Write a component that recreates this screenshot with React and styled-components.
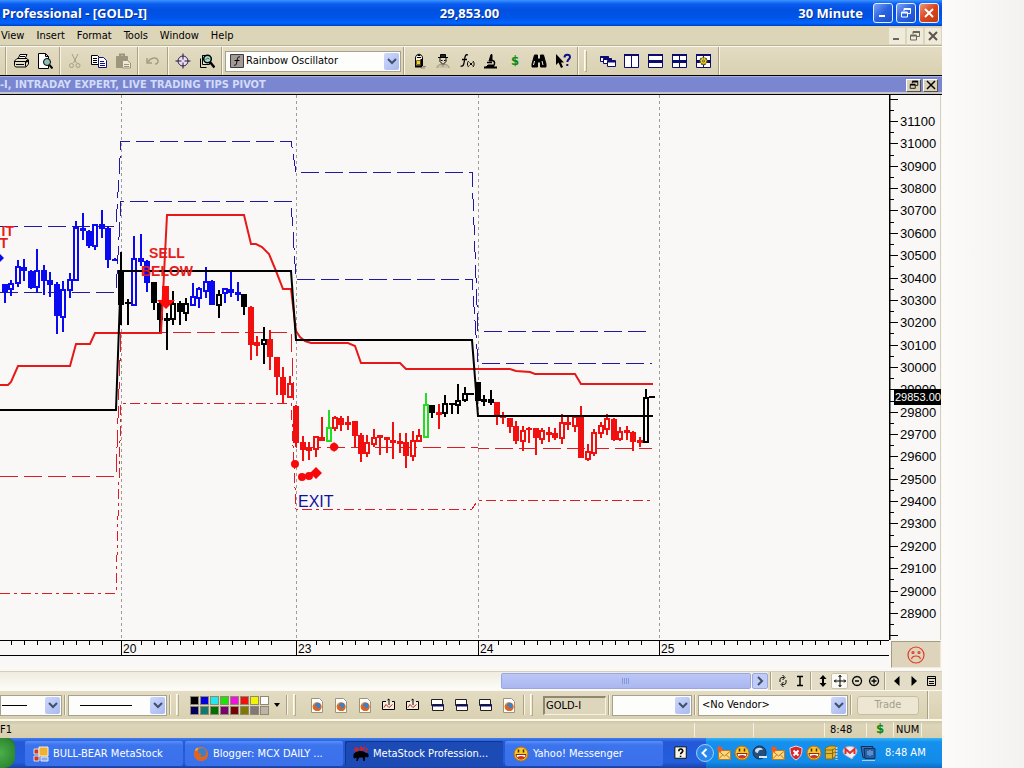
import React from "react";
import styled, { createGlobalStyle, css } from "styled-components";

const GlobalStyle = createGlobalStyle`
	* {
		box-sizing: border-box;
	}

	body {
		margin: 0;
		background-color: #f8f7f5;
		font-family: "DejaVu Sans Condensed", "Noto Sans", sans-serif;
		font-size: 11px;
		line-height: 14px;
		color: #000;
	}

	button,
	input,
	select {
		margin: 0;
		font: inherit;
		color: inherit;
	}
`;

const Page = styled.div`
	display: flex;
	min-height: 100vh;
`;

const Desktop = styled.main`
	flex: 1;
	min-width: 0;
	display: flex;
	flex-direction: column;
	background-color: #ddd5b8;
`;

const Gutter = styled.aside`
	flex: 0 0 82px;
	background: linear-gradient(90deg, #fcfbf9, #f3f2f0);
`;

const TitleBar = styled.header`
	display: grid;
	grid-template-columns: 1fr auto 1fr;
	align-items: center;
	height: 26px;
	padding: 0 3px 0 0;
	background: linear-gradient(#3a93ff 0, #0a5cf0 4px, #0150e0 10px, #0055ea 18px, #0066ff 23px, #0040c0 26px);
	color: #fff;
	font-family: "Noto Sans", sans-serif;
	font-size: 13px;
	font-weight: bold;
	text-shadow: 1px 1px #0a2f8c;
`;

const AppTitle = styled.h1`
	display: flex;
	justify-content: flex-end;
	width: 147px;
	margin: 0;
	overflow: hidden;
	white-space: nowrap;
	font-size: 13px;
`;

const TitleEnd = styled.div`
	display: flex;
	align-items: center;
	justify-content: flex-end;
	gap: 3px;
`;

const Interval = styled.span`
	margin-right: 7px;
`;

const WindowButton = styled.button`
	display: flex;
	align-items: center;
	justify-content: center;
	width: 20px;
	height: 20px;
	padding: 0;
	border: 1px solid #e8eefc;
	border-radius: 3px;
	background: ${(props) => (props.$close ? "linear-gradient(135deg, #f0957c, #d9441c 50%, #c23a14)" : "linear-gradient(135deg, #7ba3f5, #2a62e0 50%, #1c4fc8)")};
`;

const MenuBar = styled.nav`
	display: flex;
	align-items: center;
	justify-content: space-between;
	height: 20px;
	border-bottom: 1px solid #b9b298;
`;

const MenuItems = styled.div`
	display: flex;
	gap: 12px;
	padding-left: 1px;
`;

const MenuItem = styled.button`
	padding: 0;
	border: 0;
	background: none;
`;

const ChildButtons = styled.div`
	display: flex;
	gap: 2px;
	padding-right: 1px;
`;

const ChildButton = styled.button`
	display: flex;
	align-items: center;
	justify-content: center;
	width: 16px;
	height: 16px;
	padding: 0;
	border: 0;
	background-color: #efebdc;
`;

const Toolbar = styled.div`
	display: flex;
	align-items: center;
	height: 29px;
	padding-left: ${(props) => props.$inset || 0}px;
	border-top: 1px solid #fbf9f0;
	background: linear-gradient(#e3dcc3, #dad1b2);
`;

const Separator = styled.span`
	flex: 0 0 auto;
	align-self: stretch;
	width: 2px;
	margin: ${(props) => (props.$tall ? "0 2px" : "4px 2px")};
	border-left: 1px solid #a9a184;
	border-right: 1px solid #f8f5e8;
`;

const Grip = styled.span`
	flex: 0 0 auto;
	align-self: stretch;
	width: 3px;
	margin: 3px 9px 3px 3px;
	border: 1px solid #b5ac8e;
	border-left-color: #fffdf2;
	border-top-color: #fffdf2;
	background-color: #efe9d5;
`;

const IconButton = styled.button`
	flex: 0 0 auto;
	display: flex;
	align-items: center;
	justify-content: center;
	width: ${(props) => props.$width || 24}px;
	height: ${(props) => (props.$width ? 16 : 24)}px;
	padding: 0;
	border: 0;
	border-radius: 2px;
	background-color: ${(props) => (props.$pressed ? "#fbfaf5" : "transparent")};
	box-shadow: ${(props) => (props.$pressed ? "inset 0 0 0 1px #c9c2a8" : "none")};
`;

const Combo = styled.label`
	flex: 0 0 auto;
	display: flex;
	align-items: center;
	width: ${(props) => props.$width}px;
	height: 21px;
	padding: 1px ${(props) => (props.$icon ? "1px 1px 4px" : "1px")};
	border: 1px solid #a5a28f;
	background-color: #fdfdfb;
`;

const ComboValue = styled.span`
	flex: 1;
	min-width: 0;
	display: grid;
	align-items: center;
	height: 100%;

	> * {
		grid-area: 1 / 1;
	}
`;

const ComboSelect = styled.select`
	width: 100%;
	height: 17px;
	padding: 0 2px;
	border: 0;
	appearance: none;
	background: transparent;
	outline: none;
`;

const LineSample = styled.span`
	height: 1px;
	margin: 0 18px 0 ${(props) => props.$start}px;
	background-color: #000;
`;

const ComboArrow = styled.span`
	display: flex;
	align-items: center;
	justify-content: center;
	width: 15px;
	height: 17px;
	border-radius: 2px;
	background: linear-gradient(135deg, #cdd8fb, #a9b9f0);
`;

const ChildTitle = styled.div`
	display: flex;
	align-items: center;
	justify-content: space-between;
	height: 20px;
	padding-right: 4px;
	border-top: 1px solid #000;
	border-bottom: 1px solid #000;
	background-color: #7a86d0;
	box-shadow: inset 0 -2px #c9c6cc, inset 0 1px #aab0dc;
	color: #d2dcfa;
`;

const ChildName = styled.h2`
	margin: 0;
	font-size: 11px;
	font-weight: bold;
	white-space: nowrap;
`;

const ChildTools = styled.div`
	display: flex;
	gap: 2px;
`;

const RaisedButton = styled.button`
	display: flex;
	align-items: center;
	justify-content: center;
	width: 15px;
	height: 13px;
	padding: 0;
	border: 1px solid #55513f;
	border-top-color: #fff;
	border-left-color: #fff;
	background-color: #d8d0b8;
`;

const ChartGrid = styled.section`
	display: grid;
	grid-template-columns: minmax(0, 1fr) 53px;
	background-color: #f9f8f7;
`;

const Drawing = styled.svg`
	display: block;
	width: 100%;
	height: ${(props) => props.$height}px;
	font-family: "Liberation Sans", sans-serif;
`;

const MoodCell = styled.div`
	padding: 1px 1px 3px 2px;
`;

const MoodButton = styled.button`
	display: flex;
	align-items: center;
	justify-content: center;
	width: 100%;
	height: 27px;
	padding: 0;
	border: 1px solid #a39c83;
	border-right-color: #efe9d6;
	border-bottom-color: #efe9d6;
	background-color: #ddd4bb;
`;

const ScrollRow = styled.div`
	display: flex;
	align-items: center;
	height: 19px;
	padding-right: 3px;
	border-top: 1px solid #d5cfba;
	background-color: #e3dcc6;
`;

const Track = styled.div`
	flex: 1;
	display: flex;
	justify-content: flex-end;
	gap: 1px;
	height: 18px;
	padding: 1px 0;
	background: linear-gradient(#efede0, #fdfcf8);
`;

const Thumb = styled.div`
	display: flex;
	align-items: center;
	justify-content: center;
	width: 250px;
	border: 1px solid #98a6e2;
	border-radius: 2px;
	background: linear-gradient(#bcc7f7, #aab7f0);
`;

const ScrollButton = styled.button`
	display: flex;
	align-items: center;
	justify-content: center;
	width: 16px;
	padding: 0;
	border: 1px solid #9aa8dd;
	border-radius: 2px;
	background-color: #c0cbf7;
`;

const Palette = styled.div`
	display: grid;
	grid-template-columns: repeat(8, 9px);
	gap: 1px;
	margin-left: 2px;
`;

const Swatch = styled.button`
	width: 9px;
	height: 9px;
	padding: 0;
	border: 1px solid #8f8971;
	background-color: ${(props) => props.$color};
`;

const SymbolInput = styled.input`
	flex: 0 0 auto;
	width: 63px;
	height: 19px;
	margin-left: 1px;
	padding: 0 1px;
	border: 2px solid #8f8870;
	border-right: 1px solid #f5f1e2;
	border-bottom: 1px solid #f5f1e2;
	border-radius: 0;
	background-color: #ddd5bc;
`;

const TradeButton = styled.button`
	width: 62px;
	height: 19px;
	margin: 0 6px 0 3px;
	padding: 0;
	border: 1px solid #c5bea6;
	border-radius: 3px;
	background-color: #ece6d3;
	color: #a49e88;
`;

const StatusBar = styled.footer`
	display: flex;
	align-items: center;
	height: 19px;
	padding-right: 20px;
	border-top: 2px solid #fbf8ec;
	background: linear-gradient(#cfc6a8, #ddd5b9 4px, #d8cfb0);
`;

const StatusCell = styled.span`
	flex: ${(props) => (props.$width ? `0 0 ${props.$width}px` : 1)};
	padding-left: ${(props) => props.$pad || 0}px;
	border-right: 1px solid #f5f1e2;
	white-space: nowrap;
`;

const TaskBar = styled.div`
	flex: 1 0 30px;
	display: flex;
	background: linear-gradient(#3f7ef0, #2458d8 4px, #245edb 24px, #1941a5);
	color: #fff;
`;

const StartButton = styled.button`
	width: 15px;
	margin-right: 10px;
	padding: 0;
	border: 0;
	border-radius: 0 8px 10px 0;
	background: radial-gradient(circle at 0 50%, #4cb04a, #2f8a33 70%, #20601f);
`;

const TaskButton = styled.button`
	flex: 0 0 auto;
	display: flex;
	align-items: center;
	gap: 4px;
	width: 158px;
	margin: 3px 2px 2px 0;
	padding: 0 8px;
	border: 0;
	border-radius: 2px;
	color: #fff;
	white-space: nowrap;
	${(props) =>
		props.$active
			? css`
					background-color: #1c4bb5;
					box-shadow: inset 1px 1px #12358c;
				`
			: css`
					background: linear-gradient(#5a90fa, #3c74ee 4px, #3a70ea);
				`}
`;

const TaskSpacer = styled.div`
	flex: 1;
	display: flex;
	align-items: center;
	justify-content: center;
	padding-right: 10px;
`;

const Tray = styled.div`
	display: flex;
	align-items: center;
	width: 236px;
	background: linear-gradient(#35b5f5, #1690ee 4px, #128ce8 24px, #0f6cc4);
`;

const TrayToggle = styled.button`
	display: flex;
	width: 18px;
	margin: 0 2px 0 -10px;
	padding: 0;
	border: 0;
	background: none;
`;

const TrayIcons = styled.div`
	display: flex;
	gap: 2px;
	margin-right: 9px;
`;

// ---- chart data ----

const BLUE = "#0a0af0";
const NAVY = "#2018a0";
const RED = "#f01010";
const GREEN = "#22dd22";
const BLACK = "#000";

// x, high, low, body top, body bottom, colour, hollow
const candles = [
	[5, 284, 303, 284, 292, BLUE],
	[11, 280, 296, 284, 289, BLUE, 1],
	[18, 260, 287, 267, 283, BLUE, 1],
	[24, 259, 281, 267, 271, BLUE],
	[31, 270, 289, 271, 288, BLUE],
	[37, 249, 293, 271, 287, BLUE, 1],
	[44, 265, 295, 270, 281, BLUE],
	[50, 272, 297, 280, 285, BLUE],
	[57, 282, 334, 284, 316, BLUE],
	[63, 281, 332, 290, 317, BLUE, 1],
	[70, 273, 298, 280, 290, BLUE, 1],
	[76, 221, 281, 228, 280, BLUE, 1],
	[83, 213, 240, 228, 231, BLUE],
	[89, 230, 248, 231, 246, BLUE],
	[95, 225, 250, 225, 246, BLUE, 1],
	[102, 210, 238, 224, 229, BLUE],
	[108, 226, 268, 228, 260, BLUE],
	[115, 258, 261, 259, 261, BLUE],
	[121, 252, 325, 270, 305, BLACK],
	[128, 299, 325, 302, 304, BLACK],
	[134, 236, 305, 259, 305, BLUE, 1],
	[141, 234, 266, 258, 262, BLUE],
	[147, 260, 292, 261, 283, BLUE],
	[154, 282, 310, 282, 303, BLACK],
	[160, 302, 332, 303, 320, BLACK],
	[167, 313, 350, 318, 321, BLACK],
	[173, 291, 325, 304, 319, BLACK, 1],
	[180, 301, 325, 303, 312, BLACK],
	[186, 298, 321, 304, 313, BLACK, 1],
	[193, 283, 305, 297, 305, BLUE, 1],
	[199, 287, 308, 289, 298, BLUE, 1],
	[206, 267, 298, 282, 291, BLUE, 1],
	[212, 280, 305, 281, 305, BLUE],
	[219, 290, 318, 295, 305, BLACK, 1],
	[225, 288, 303, 289, 293, BLUE, 1],
	[231, 272, 297, 289, 293, BLUE],
	[238, 282, 301, 292, 295, BLUE],
	[244, 294, 315, 294, 307, BLACK],
	[251, 306, 360, 307, 345, RED],
	[257, 336, 356, 342, 346, RED],
	[264, 327, 364, 340, 344, BLACK, 1],
	[270, 330, 370, 339, 357, RED],
	[277, 357, 395, 357, 377, RED],
	[283, 367, 403, 377, 395, RED],
	[290, 376, 397, 384, 397, RED, 1],
	[296, 405, 447, 406, 443, RED],
	[303, 436, 461, 442, 450, RED],
	[309, 442, 460, 448, 451, RED],
	[316, 436, 457, 437, 449, RED, 1],
	[322, 417, 441, 437, 441, RED],
	[329, 410, 441, 428, 441, GREEN, 1],
	[335, 416, 431, 418, 428, RED, 1],
	[341, 416, 431, 418, 425, RED],
	[348, 416, 430, 422, 425, RED],
	[355, 421, 447, 421, 436, RED],
	[361, 433, 462, 435, 454, RED],
	[367, 435, 457, 443, 453, RED, 1],
	[374, 429, 447, 438, 444, RED, 1],
	[380, 435, 455, 435, 438, RED],
	[387, 437, 453, 437, 440, RED],
	[393, 422, 459, 440, 443, RED],
	[400, 433, 453, 441, 444, RED],
	[406, 433, 468, 442, 456, RED],
	[413, 431, 461, 441, 456, RED, 1],
	[419, 429, 442, 436, 441, RED, 1],
	[426, 393, 438, 405, 437, GREEN, 1],
	[432, 405, 418, 405, 413, BLACK],
	[439, 404, 429, 412, 415, RED],
	[445, 395, 417, 404, 413, BLACK, 1],
	[452, 403, 414, 403, 405, BLACK],
	[458, 384, 414, 401, 405, BLACK, 1],
	[465, 387, 402, 394, 400, BLACK, 1],
	[471, 393, 395, 393, 395, BLACK],
	[478, 382, 401, 382, 401, BLACK],
	[484, 395, 406, 399, 402, BLACK],
	[491, 390, 405, 399, 403, BLACK],
	[497, 402, 425, 402, 415, RED],
	[503, 412, 424, 415, 418, RED],
	[510, 418, 433, 418, 427, RED],
	[516, 421, 444, 426, 441, RED],
	[523, 426, 451, 431, 441, RED, 1],
	[529, 427, 443, 428, 430, RED],
	[536, 428, 455, 428, 438, RED],
	[542, 428, 444, 431, 439, RED, 1],
	[549, 427, 442, 432, 435, RED],
	[555, 428, 440, 433, 438, RED],
	[562, 414, 444, 423, 438, RED, 1],
	[568, 415, 430, 422, 425, RED],
	[575, 416, 432, 417, 426, RED, 1],
	[581, 406, 458, 416, 458, RED],
	[588, 444, 461, 452, 459, RED, 1],
	[594, 429, 456, 433, 453, RED, 1],
	[601, 422, 438, 426, 433, RED, 1],
	[607, 414, 435, 419, 429, RED, 1],
	[614, 418, 441, 419, 440, RED],
	[620, 427, 441, 432, 439, RED, 1],
	[627, 426, 440, 430, 433, RED],
	[633, 431, 451, 432, 442, RED],
	[640, 437, 447, 440, 443, RED],
	[646, 389, 443, 398, 442, BLACK, 1],
	[652, 396, 398, 396, 398, BLACK],
];

const pivots = [
	{ color: NAVY, dash: "18 6", points: "0,226 116,226 121,141 291,141 296,172 472,172 478,331 652,331" },
	{ color: NAVY, dash: "18 6", points: "0,292 116,292 121,201 291,201 296,279 472,279 478,363 652,363" },
	{ color: "#dc1c24", dash: "18 6", points: "0,476 116,476 121,332 291,332 296,447 472,447 478,448 652,448" },
	{ color: "#dc1c24", dash: "10 4 3 4", points: "0,593 116,593 121,403 291,403 296,509 472,509 478,500 652,500" },
];

const pivotLine = "0,410 116,410 121,271 291,271 296,340 472,340 478,416 653,416";

const trailingStop =
	"0,385 8,385 11,382 18,366 70,366 76,344 90,344 95,333 161,333 167,215 244,215 251,244 256,244 262,247 269,254 276,271 283,289 291,289 296,331 300,337 305,341 311,343 348,343 355,346 361,363 400,363 406,369 510,369 516,371 530,372 535,374 575,374 581,384 653,384";

const days = [
	{ x: 121, label: "20", ticks: [141, 283] },
	{ x: 296, label: "23", ticks: [316, 466] },
	{ x: 478, label: "24", ticks: [498, 648] },
	{ x: 659, label: "25", ticks: [685, 884] },
];

const priceY = (price) => Math.round(121 + ((31100 - price) / 100) * 22.36);

const range = (from, to, step) => {
	const values = [];
	for (let v = from; v <= to; v += step) values.push(v);
	return values;
};

const Candle = ({ data }) => {
	const [x, high, low, top, bottom, color, hollow] = data;
	return (
		<g>
			<path d={`M${x} ${high}V${low}`} stroke={color} strokeWidth="2" />
			{hollow ? (
				<rect x={x - 2} y={top} width="4" height={bottom - top} fill="#faf9f8" stroke={color} strokeWidth="2" />
			) : (
				<rect x={x - 3} y={top} width="6" height={bottom - top} fill={color} />
			)}
		</g>
	);
};

const Plot = () => (
	<Drawing $height={545} role="img" aria-label="GOLD-I 30 minute candles">
		<g transform="translate(0 -95)">
			{days.map((day) => (
				<path key={day.x} d={`M${day.x}.5 95V640`} stroke="#a09a9a" strokeDasharray="3 3" />
			))}
			<g fill="none" shapeRendering="crispEdges">
				{pivots.map((line) => (
					<polyline key={line.points} points={line.points} stroke={line.color} strokeDasharray={line.dash} />
				))}
			</g>
			{candles.map((c) => (
				<Candle key={c[0]} data={c} />
			))}
			<polyline points={trailingStop} fill="none" stroke="#e81818" strokeWidth="2" />
			<polyline points={pivotLine} fill="none" stroke="#000" strokeWidth="2" />
			<path d="M162 286h7v14h6l-9 9-9-9h5z" fill="#ff0a0a" />
			<g fill="#f80808">
				<circle cx="295" cy="464" r="4" />
				<circle cx="302" cy="477" r="4" />
				<circle cx="309" cy="476" r="4" />
				<path d="M316 467l6 6-6 6-6-6z" />
				<circle cx="334" cy="447" r="4" />
				<path d="M330 447l4-5 5 5-5 5z" />
			</g>
			<path d="M-4 258l4-4 4 4-4 4z" fill={BLUE} />
			<g fill="#e81c1c" fontSize="14" fontWeight="bold" textAnchor="middle">
				<text x="167" y="258">SELL</text>
				<text x="167" y="276">BELOW</text>
			</g>
			<g fill="#e81c1c" fontSize="14" fontWeight="bold" textAnchor="end">
				<text x="14" y="236">IT</text>
				<text x="8" y="248">T</text>
			</g>
			<text x="298" y="507" fill="#1010a0" fontSize="16">EXIT</text>
		</g>
	</Drawing>
);

const PriceAxis = () => (
	<Drawing $height={545} aria-label="Price scale">
		<g transform="translate(-889 -95)">
			<path d="M889.5 95V640" stroke="#000" strokeWidth="2" />
			{range(28800, 31200, 100).map((price) => (
				<path key={price} d={`M890 ${priceY(price)}.5h8`} stroke="#000" />
			))}
			{range(28850, 31150, 100).map((price) => (
				<path key={price} d={`M890 ${priceY(price)}.5h4`} stroke="#000" />
			))}
			{range(28900, 31100, 100).map((price) => (
				<text key={price} x="900" y={priceY(price) + 5} fontSize="13">
					{price}
				</text>
			))}
			<path d="M940.5 95V640" stroke="#d5cfb8" />
			<rect x="894" y="389" width="47" height="16" fill="#000" />
			<text x="895" y="401" fontSize="11" fill="#fff">
				29853.00
			</text>
		</g>
	</Drawing>
);

const TimeAxis = () => (
	<Drawing $height={31} aria-label="Time scale">
		<path d="M0 0.5H889M0 15.5H889" stroke="#000" />
		{range(11, 110, 13).map((x) => (
			<path key={x} d={`M${x}.5 0v5`} stroke="#000" />
		))}
		{days.map((day) => (
			<g key={day.x}>
				<path d={`M${day.x}.5 0v16`} stroke="#000" />
				{range(day.ticks[0], day.ticks[1], 13).map((x) => (
					<path key={x} d={`M${x}.5 0v5`} stroke="#000" />
				))}
				<text x={day.x + 2} y="13" fontSize="12">
					{day.label}
				</text>
			</g>
		))}
	</Drawing>
);

// ---- icons ----

const Icon = ({ size = 16, children }) => (
	<svg width={size} height={size} viewBox="0 0 16 16" fill="none" stroke="#000" aria-hidden="true">
		{children}
	</svg>
);

const PrinterIcon = () => (
	<Icon>
		<path d="M5 6l2-4.500h7l-2 4.500" fill="#fff" />
		<path d="M1.500 8l2.500-2.500h10l1.500 1.500v4l-2.500 3H2.500l-1-1.500z" fill="#e6dfc8" />
		<path d="M1.500 8.500h11l2.500-2M12.500 8.500v5M3 11.500h8M7 3.500h5" />
		<path d="M13 9l2-1.500" strokeWidth="2" />
	</Icon>
);

const PreviewIcon = () => (
	<Icon>
		<path d="M1.500.5h7l3 3v12h-10zM8.500.5v3h3" fill="#fff" />
		<circle cx="10" cy="9" r="3.500" fill="#8fc0b8" />
		<path d="M12.500 12l3 3.500" strokeWidth="2" />
	</Icon>
);

const CutIcon = () => (
	<Icon>
		<g stroke="#a59d83">
			<path d="M5 1l4.500 9M11 1L6.500 10" />
			<circle cx="4.500" cy="12.500" r="2" />
			<circle cx="11" cy="12.500" r="2" />
		</g>
	</Icon>
);

const CopyIcon = () => (
	<Icon>
		<path d="M.5 2.500h6l2 2v7h-8z" fill="#fff" />
		<path d="M2 5.500h4M2 7.500h4M2 9.500h4" />
		<path d="M7.500 4.500h5l3 3v7h-8z" fill="#fff" stroke="#101080" />
		<path d="M9 8.500h4M9 10.500h5M9 12.500h5" stroke="#101080" />
	</Icon>
);

const PasteIcon = () => (
	<Icon>
		<path d="M1.500 3.500h11v11h-11z" fill="#9d957c" stroke="#9d957c" />
		<path d="M5 3.500V1.500h4v2" stroke="#9d957c" strokeWidth="2" />
		<path d="M7.500 7.500h5l3 2.500v5h-8zM9 11.500h5M9 13.500h5" fill="#eee8d6" stroke="#9d957c" />
	</Icon>
);

const UndoIcon = () => (
	<Icon>
		<path d="M3 9c3-5 9-5 10-1.500.5 2-1 3.500-3 3.500" stroke="#a59d83" strokeWidth="1.500" />
		<path d="M2 5v5h5" stroke="#a59d83" strokeWidth="1.500" />
	</Icon>
);

const CrosshairIcon = () => (
	<Icon>
		<circle cx="8" cy="8" r="5" fill="#eadff0" stroke="#302050" />
		<path d="M8 .5v6M8 9.500v6M.5 8h6M9.500 8h6" stroke="#201040" />
	</Icon>
);

const ExploreIcon = () => (
	<Icon>
		<path d="M1.500 5.500v9h6M3.500 2.500h6" />
		<path d="M3.500 2.500v9h7v-9z" fill="#dff2dc" />
		<circle cx="8.500" cy="6" r="3.800" fill="#a9d5cc" strokeWidth="1.500" />
		<path d="M11 9l4.500 5.500" strokeWidth="2.500" />
		<path d="M6.500 7l2-2 2 1" stroke="#287848" />
	</Icon>
);

const FunctionIcon = () => (
	<svg width="14" height="14" viewBox="0 0 14 14" aria-hidden="true">
		<path d="M.5.5h13v13H.5z" fill="#a39a96" stroke="#403c3c" />
		<path d="M10 3c-2-.8-2.500 1-3 4s-1 5-3 4M4.500 6.500h5" fill="none" stroke="#000" />
	</svg>
);

const ExpertIcon = () => (
	<Icon>
		<path d="M4.500 13V5c0-5 7-5 7 0v8z" fill="#f5f3e8" />
		<path d="M6 4.500h4M6.500 2.500h3" />
		<path d="M5.500 7.500h4v4h-4z" fill="#e8d230" stroke="#806a10" />
		<path d="M4 13.500h7M10.500 6v7" strokeWidth="2" />
		<path d="M12 13.500h3M10 15h4" stroke="#8a836b" />
	</Icon>
);

const AdvisorIcon = () => (
	<Icon>
		<path d="M3 4.500h10M5.500 4V1.500h5V4" fill="#222" />
		<path d="M5 5v3.500l3 3 3-3V5M6 7.500h1.500M9 7.500h1.500" />
		<path d="M2 15c0-3 2-3 4-4l2 2.500 2-2.500c2 1 4 1 4 4" stroke="#9a937c" fill="#c9c2aa" />
	</Icon>
);

const IndicatorIcon = () => (
	<Icon>
		<path d="M9 2c-2.500-1-3 1-3.500 5s-1 7-4 6M3 6.500h5" strokeWidth="1.300" />
		<path d="M9.500 8c-1.500 2-1.500 4 0 6M14 8c1.500 2 1.500 4 0 6M10.500 9.500l3 3M13.500 9.500l-3 3" />
	</Icon>
);

const TesterIcon = () => (
	<Icon>
		<path d="M8 1.500L6 8h3L9 1.500z" fill="#000" />
		<path d="M9 7.500c3 0 3.500 4 1 5.500M4 9.500h5" strokeWidth="1.500" />
		<path d="M5 12h5l1 2H3z" fill="#000" />
		<path d="M1 14.500h13" strokeWidth="2" />
	</Icon>
);

const Dollar = styled.span`
	color: #0a8a12;
	font-size: 13px;
	font-weight: bold;
`;

const BinocularsIcon = () => (
	<Icon>
		<path d="M3.500 2h3v4h3V2h3l2.500 9v3H9.500V9h-3v5H1v-3z" fill="#000" />
		<path d="M3.500 8l-1 4M11 8l1 4" stroke="#eee" />
	</Icon>
);

const HelpIcon = () => (
	<Icon>
		<path d="M1 1v11l2.500-2.500L6 15l2-1-2-4.500h3z" fill="#000" stroke="none" />
		<path d="M9.500 4.500c0-4 5.500-3.500 5.500-.5 0 2.200-2.700 2.300-2.700 5M12.300 11v2" stroke="#101080" strokeWidth="2" />
	</Icon>
);

const CascadeIcon = () => (
	<Icon>
		<g fill="#fff" stroke="#0c0c70">
			<path d="M.5 3.500h8v5h-8z" />
			<path d="M3.500 5.500h8v5h-8z" />
			<path d="M7.500 7.500h8v6h-8z" />
			<path d="M.5 4h8M3.500 6h8M7.500 8.500h8" strokeWidth="2" />
		</g>
	</Icon>
);

const TileIcon = ({ rows, columns, gear }) => (
	<Icon>
		<path d="M.5 1.500h14v13H.5z" fill="#fff" stroke="#0c0c70" />
		<path d="M0 2h15" stroke="#0c0c70" strokeWidth="2" />
		{rows && <path d="M0 8.500h15" stroke="#0c0c70" strokeWidth="3" />}
		{columns && <path d="M7.500 2v12" stroke="#0c0c70" />}
		{gear && <circle cx="7.500" cy="8" r="3.500" fill="#e5cf28" stroke="#5c500c" strokeDasharray="2 1" strokeWidth="1.500" />}
		{gear && <circle cx="7.500" cy="8" r="1" fill="#fff" stroke="#5c500c" />}
	</Icon>
);

const RestoreGlyph = ({ color, size = 12 }) => (
	<svg width={size} height={size} viewBox="0 0 12 12" fill="none" stroke={color} aria-hidden="true">
		<path d="M4 4V1.500h6.500v5H8" />
		<path d="M4 2h6.500M1.500 5.500h6" strokeWidth="2" />
		<path d="M1.500 5.500h6v4.500h-6z" />
	</svg>
);

const CloseGlyph = ({ color, width = 2 }) => (
	<svg width="12" height="12" viewBox="0 0 12 12" fill="none" stroke={color} strokeWidth={width} aria-hidden="true">
		<path d="M2 2l8 8M10 2l-8 8" />
	</svg>
);

const MinimizeGlyph = ({ color }) => (
	<svg width="12" height="12" viewBox="0 0 12 12" stroke={color} strokeWidth="2" aria-hidden="true">
		<path d="M2 9h6" />
	</svg>
);

const Chevron = ({ right }) => (
	<svg width="10" height="10" viewBox="0 0 10 10" fill="none" stroke="#40506c" strokeWidth="2" aria-hidden="true">
		<path d={right ? "M3 1l4 4-4 4" : "M1 3l4 4 4-4"} />
	</svg>
);

const FirefoxBall = () => (
	<>
		<circle cx="8" cy="8" r="7" fill="#e8701c" stroke="none" />
		<circle cx="9" cy="6.500" r="4.500" fill="#3f7fc4" stroke="none" />
		<path d="M1.500 5c1 0 3 0 4 2 1 0 3 .5 3 2-1 1.500-3 1-4 0 1 3 5 4 8 1 2-2 1-5 0-7 3 3 3 8 0 10.500-4 3-10 1-11-4z" fill="#e2641a" stroke="none" />
		<path d="M2 5c0-2 2-3.500 3-3.500L4.500 4z" fill="#f5b030" stroke="none" />
	</>
);

const DocumentIcon = () => (
	<Icon>
		<path d="M2.500 1.500h8l3 3v11h-11z" fill="#fff" stroke="#9a957f" />
		<g transform="translate(3 4.500) scale(.64)">
			<FirefoxBall />
		</g>
	</Icon>
);

const ChartNoteIcon = () => (
	<Icon>
		<path d="M5 4.500H1.500v8h12v-8H11" fill="#f6efdf" />
		<path d="M8 2v6M6.500 3l1.500-1" />
		<path d="M3 10.500l2-3 3 3 3.500-3" stroke="#b02a20" />
	</Icon>
);

const LayoutIcon = () => (
	<Icon>
		<path d="M2.500 2.500h11v6h-11z" fill="#fff" stroke="#222" />
		<path d="M3.500 7.500h11v6h-11z" fill="#fff" stroke="#222" />
		<path d="M3 8.500h12" strokeWidth="2" stroke="#101060" />
	</Icon>
);

const MoodIcon = () => (
	<svg width="18" height="18" viewBox="0 0 18 18" fill="none" stroke="#e03a28" strokeWidth="1.200" aria-hidden="true">
		<circle cx="9" cy="9" r="8" />
		<circle cx="6" cy="6.500" r="1" />
		<circle cx="12" cy="6.500" r="1" />
		<path d="M4.500 13c1-4 8-4 9 0" />
	</svg>
);

const Smiley = () => (
	<Icon>
		<circle cx="8" cy="8" r="7" fill="#f7c52c" stroke="#b8700c" />
		<path d="M5.500 3.500v3M10.500 3.500v3" stroke="#4a2a06" strokeWidth="1.500" />
		<path d="M3 8.500h10c0 6-10 6-10 0z" fill="#fff" stroke="#8a2a10" />
		<path d="M4.500 11c2-1.500 5-1.500 7 0-1 2.500-6 2.500-7 0z" fill="#d83020" stroke="none" />
	</Icon>
);

const MailIcon = () => (
	<Icon>
		<path d="M2.500 5.500h12v9h-12z" fill="#fbd980" stroke="#c07a1c" />
		<path d="M2.500 6l6 5 6-5M2.500 14l4-4M14.500 14l-4-4" stroke="#c07a1c" />
		<path d="M3.500 0l1 2.500L7 1.500 6 4l2 1.500-2.500.5L4 8 3 5.500 0 5l2-1.500-.5-2.500 2 1z" fill="#f05a20" stroke="none" />
	</Icon>
);

const OrbIcon = () => (
	<Icon>
		<circle cx="7.500" cy="7.500" r="6.500" fill="#264e7c" stroke="#153458" />
		<path d="M3 5c2-3 7-3 8 0-2-1-5 0-5 3-2 0-3-1-3-3z" fill="#cfe2f5" stroke="none" />
		<path d="M7 12h8" stroke="#dbe9f5" strokeWidth="2" />
	</Icon>
);

const ShieldIcon = () => (
	<Icon>
		<path d="M8 1l6 2c0 6-1 9-6 12-5-3-6-6-6-12z" fill="#d8242c" stroke="#f2d8d8" />
		<path d="M5.500 5.500l5 5M10.500 5.500l-5 5" stroke="#fff" strokeWidth="2" />
	</Icon>
);

const ArchiveIcon = () => (
	<Icon>
		<path d="M1.500 3l4-2h6v10l-3 3h-7z" fill="#e2b62c" stroke="#8a6a10" />
		<path d="M1.500 5h7l3-2M1.500 8.500h7l3-2M8.500 4v10" stroke="#8a6a10" />
		<path d="M12.500 2v13" stroke="#c8c8c8" strokeWidth="2" strokeDasharray="2 1" />
	</Icon>
);

const GmailIcon = () => (
	<Icon>
		<path d="M1 6c0-6 14-6 14 0 0 4-4 5-5 8-3-2-9-4-9-8z" fill="#f6eeee" stroke="#a8b4c4" />
		<path d="M3.500 9V4l4.500 4 4.500-4v5" stroke="#dc2c30" strokeWidth="2" />
	</Icon>
);

const NetworkIcon = () => (
	<Icon>
		<path d="M1 1.500h12v11H3z" fill="#3270b8" stroke="#142c54" />
		<path d="M4 3.500h11v10H5z" fill="#2860a8" stroke="#123058" />
		<path d="M8 6v4M10 5v6M12 6v4" stroke="#8cc0ee" />
		<path d="M2 15.500h13" stroke="#b8cce0" />
	</Icon>
);

const MetaStockTaskIcon = () => (
	<Icon>
		<path d="M1 5l2-3 1 3 2-3M8 5V1l2 3 2-3M13 6l1-4" stroke="#d42424" strokeWidth="1.500" />
		<path d="M1 8c3-3 9-3 11-1l3 1v3l-3-1-1 5-1-4H6l-2 4v-4l-3 1z" fill="#000" />
	</Icon>
);

const FormIcon = () => (
	<Icon>
		<path d="M1 3h5v5H1zM1 10h5v5H1z" fill="#c8382c" stroke="#e8e0d8" />
		<path d="M6 1h9v9H6z" fill="#f0b030" stroke="#f8efdc" />
		<path d="M8 11h7v4H8z" fill="#8aa8dc" stroke="#e8ecf4" />
	</Icon>
);

const scrollIcons = {
	refresh: <path d="M5 9V6.500C5 5 6 4.500 9 4.500M11 7v2.500c0 1.500-1 2-4 2M7.500 2l2.500 2.500L7.500 7M8.500 9L6 11.500 8.500 14" />,
	cursor: <path d="M5 3.500h6M5 12.500h6M8 3.500v9" strokeWidth="1.500" />,
	vertical: <path d="M8 2L4.500 6H7v4H4.500L8 14l3.500-4H9V6h2.500z" fill="#000" stroke="none" />,
	move: <path d="M8 2v12M2 8h12M6.500 4L8 2.500 9.500 4M6.500 12L8 13.500 9.500 12M4 6.500L2.500 8 4 9.500M12 6.500L13.500 8 12 9.500" />,
	zoomOut: <path d="M8 3.500a4.500 4.500 0 1 0 .1 0M6 8h4" strokeWidth="1.300" />,
	zoomIn: <path d="M8 3.500a4.500 4.500 0 1 0 .1 0M5.500 8h5M8 5.500v5" strokeWidth="1.300" />,
	back: <path d="M10.500 3v10L5 8z" fill="#000" stroke="none" />,
	forward: <path d="M5.500 3v10L11 8z" fill="#000" stroke="none" />,
	list: <path d="M4.500 3.500h8v9h-8zM4.500 5.500h8M6 8.500h5M6 10.500h5" />,
};

const ScrollTool = ({ name, label, pressed }) => (
	<IconButton $width={17} $pressed={pressed} aria-label={label}>
		<Icon>{scrollIcons[name]}</Icon>
	</IconButton>
);

const Tool = ({ label, children }) => (
	<IconButton aria-label={label} title={label}>
		{children}
	</IconButton>
);

const swatches = [
	"#000000", "#0000e0", "#20e8f0", "#20e010", "#f010e0", "#f01010", "#f4f400", "#ffffff",
	"#000060", "#107870", "#007000", "#780070", "#780008", "#807800", "#807878", "#bcb4a8",
];

const tasks = [
	{ name: "BULL-BEAR MetaStock", icon: <FormIcon /> },
	{ name: "Blogger: MCX DAILY ...", icon: <Icon><FirefoxBall /></Icon> },
	{ name: "MetaStock Profession...", icon: <MetaStockTaskIcon />, active: true },
	{ name: "Yahoo! Messenger", icon: <Smiley /> },
];

const LineCombo = ({ width, label, start }) => (
	<Combo $width={width}>
		<ComboValue>
			<LineSample $start={start} />
			<ComboSelect aria-label={label}>
				<option aria-label="Solid" value="solid"></option>
			</ComboSelect>
		</ComboValue>
		<ComboArrow>
			<Chevron />
		</ComboArrow>
	</Combo>
);

const MainToolbar = () => (
	<Toolbar $inset={3}>
		<Separator $tall />
		<Tool label="Print"><PrinterIcon /></Tool>
		<Tool label="Print preview"><PreviewIcon /></Tool>
		<Separator $tall />
		<Tool label="Cut"><CutIcon /></Tool>
		<Tool label="Copy"><CopyIcon /></Tool>
		<Tool label="Paste"><PasteIcon /></Tool>
		<Separator $tall />
		<Tool label="Undo"><UndoIcon /></Tool>
		<Separator $tall />
		<Tool label="Crosshair"><CrosshairIcon /></Tool>
		<Tool label="Explore"><ExploreIcon /></Tool>
		<Separator $tall />
		<Combo $width={176} $icon>
			<FunctionIcon />
			<ComboValue>
				<ComboSelect aria-label="Indicator">
					<option>Rainbow Oscillator</option>
				</ComboSelect>
			</ComboValue>
			<ComboArrow>
				<Chevron />
			</ComboArrow>
		</Combo>
		<Separator $tall />
		<Tool label="Expert"><ExpertIcon /></Tool>
		<Tool label="Advisor"><AdvisorIcon /></Tool>
		<Tool label="Indicator builder"><IndicatorIcon /></Tool>
		<Tool label="System tester"><TesterIcon /></Tool>
		<Tool label="Option scope"><Dollar>$</Dollar></Tool>
		<Tool label="Explorer"><BinocularsIcon /></Tool>
		<Tool label="Help"><HelpIcon /></Tool>
		<Separator $tall />
		<Grip />
		<Tool label="Cascade"><CascadeIcon /></Tool>
		<Tool label="Tile columns"><TileIcon columns /></Tool>
		<Tool label="Tile rows"><TileIcon rows /></Tool>
		<Tool label="Tile grid"><TileIcon rows columns /></Tool>
		<Tool label="Tile options"><TileIcon rows columns gear /></Tool>
		<Separator $tall />
	</Toolbar>
);

const DrawingToolbar = () => (
	<Toolbar>
		<LineCombo width={62} label="Line style" start={0} />
		<Separator />
		<LineCombo width={99} label="Line weight" start={10} />
		<Separator />
		<Grip />
		<Palette>
			{swatches.map((color) => (
				<Swatch key={color} $color={color} aria-label={color} />
			))}
		</Palette>
		<IconButton $width={15} aria-label="More colours">
			<svg width="6" height="4" viewBox="0 0 6 4" aria-hidden="true">
				<path d="M0 0h6L3 4z" />
			</svg>
		</IconButton>
		<Separator />
		<Grip />
		<Tool label="Template 1"><DocumentIcon /></Tool>
		<Tool label="Template 2"><DocumentIcon /></Tool>
		<Tool label="Template 3"><DocumentIcon /></Tool>
		<Tool label="Chart note"><ChartNoteIcon /></Tool>
		<Tool label="Chart alert"><ChartNoteIcon /></Tool>
		<Tool label="Layout 1"><LayoutIcon /></Tool>
		<Tool label="Layout 2"><LayoutIcon /></Tool>
		<Tool label="Layout 3"><LayoutIcon /></Tool>
		<Tool label="Template 4"><DocumentIcon /></Tool>
		<Separator />
		<Grip />
		<SymbolInput aria-label="Symbol" defaultValue="GOLD-I" />
		<Separator />
		<Combo $width={80}>
			<ComboValue>
				<ComboSelect aria-label="Account">
					<option aria-label="None" value=""></option>
				</ComboSelect>
			</ComboValue>
			<ComboArrow>
				<Chevron />
			</ComboArrow>
		</Combo>
		<Separator />
		<Combo $width={150}>
			<ComboValue>
				<ComboSelect aria-label="Vendor">
					<option>&lt;No Vendor&gt;</option>
				</ComboSelect>
			</ComboValue>
			<ComboArrow>
				<Chevron />
			</ComboArrow>
		</Combo>
		<Separator />
		<TradeButton disabled>Trade</TradeButton>
		<Separator $tall />
	</Toolbar>
);

const App = () => (
	<Page>
		<GlobalStyle />
		<Desktop>
			<TitleBar>
				<AppTitle>k Professional - [GOLD-I]</AppTitle>
				<span>29,853.00</span>
				<TitleEnd>
					<Interval>30 Minute</Interval>
					<WindowButton aria-label="Minimize"><MinimizeGlyph color="#fff" /></WindowButton>
					<WindowButton aria-label="Restore"><RestoreGlyph color="#fff" /></WindowButton>
					<WindowButton $close aria-label="Close"><CloseGlyph color="#fff" /></WindowButton>
				</TitleEnd>
			</TitleBar>
			<MenuBar>
				<MenuItems>
					{["View", "Insert", "Format", "Tools", "Window", "Help"].map((item) => (
						<MenuItem key={item}>{item}</MenuItem>
					))}
				</MenuItems>
				<ChildButtons>
					<ChildButton aria-label="Minimize chart"><MinimizeGlyph color="#6c6654" /></ChildButton>
					<ChildButton aria-label="Restore chart"><RestoreGlyph color="#6c6654" /></ChildButton>
					<ChildButton aria-label="Close chart"><CloseGlyph color="#5c5648" /></ChildButton>
				</ChildButtons>
			</MenuBar>
			<MainToolbar />
			<ChildTitle>
				<ChildName>-I, INTRADAY EXPERT, LIVE TRADING TIPS PIVOT</ChildName>
				<ChildTools>
					<RaisedButton aria-label="Restore window"><RestoreGlyph color="#000" size={10} /></RaisedButton>
					<RaisedButton aria-label="Close window"><CloseGlyph color="#000" width={1.5} /></RaisedButton>
				</ChildTools>
			</ChildTitle>
			<ChartGrid>
				<Plot />
				<PriceAxis />
				<TimeAxis />
				<MoodCell>
					<MoodButton aria-label="Expert mood"><MoodIcon /></MoodButton>
				</MoodCell>
			</ChartGrid>
			<ScrollRow>
				<Track>
					<Thumb>
						<svg width="10" height="6" viewBox="0 0 10 6" stroke="#8797dc" aria-hidden="true">
							<path d="M1.500 0v6M3.500 0v6M5.500 0v6M7.500 0v6" />
						</svg>
					</Thumb>
					<ScrollButton aria-label="Scroll right"><Chevron right /></ScrollButton>
				</Track>
				<Separator $tall />
				<ScrollTool name="refresh" label="Refresh" />
				<ScrollTool name="cursor" label="Text cursor" />
				<Separator $tall />
				<ScrollTool name="vertical" label="Rescale" />
				<ScrollTool name="move" label="Move" pressed />
				<ScrollTool name="zoomOut" label="Zoom out" />
				<ScrollTool name="zoomIn" label="Zoom in" />
				<Separator $tall />
				<ScrollTool name="back" label="Previous" />
				<ScrollTool name="forward" label="Next" />
				<ScrollTool name="list" label="List" />
			</ScrollRow>
			<DrawingToolbar />
			<StatusBar>
				<StatusCell>F1</StatusCell>
				<StatusCell $width={59}>&nbsp;</StatusCell>
				<StatusCell $width={71}>&nbsp;</StatusCell>
				<StatusCell $width={42} $pad={5}>8:48</StatusCell>
				<StatusCell $width={27} $pad={9}><Dollar>$</Dollar></StatusCell>
				<StatusCell $width={28} $pad={2}>NUM</StatusCell>
			</StatusBar>
			<TaskBar>
				<StartButton aria-label="Start" />
				{tasks.map((task) => (
					<TaskButton key={task.name} $active={task.active}>
						{task.icon}
						{task.name}
					</TaskButton>
				))}
				<TaskSpacer>
					<Icon size={14}>
						<path d="M1 1h13v13H1z" fill="#f8f6e4" />
						<path d="M5.500 6c0-4 5-3 4.500 0-.3 1.500-2.500 1.500-2.500 3.500M7.500 11v1.500" strokeWidth="1.800" />
					</Icon>
				</TaskSpacer>
				<Tray>
					<TrayToggle aria-label="Show hidden icons">
						<svg width="18" height="18" viewBox="0 0 18 18" aria-hidden="true">
							<circle cx="9" cy="9" r="8.500" fill="#2a86ec" stroke="#9cd0fa" />
							<path d="M10.500 5l-4 4 4 4" fill="none" stroke="#fff" strokeWidth="2" />
						</svg>
					</TrayToggle>
					<TrayIcons>
						<MailIcon />
						<Smiley />
						<OrbIcon />
						<MailIcon />
						<ShieldIcon />
						<Smiley />
						<ArchiveIcon />
						<GmailIcon />
						<NetworkIcon />
					</TrayIcons>
					<time>8:48 AM</time>
				</Tray>
			</TaskBar>
		</Desktop>
		<Gutter />
	</Page>
);

export default App;
